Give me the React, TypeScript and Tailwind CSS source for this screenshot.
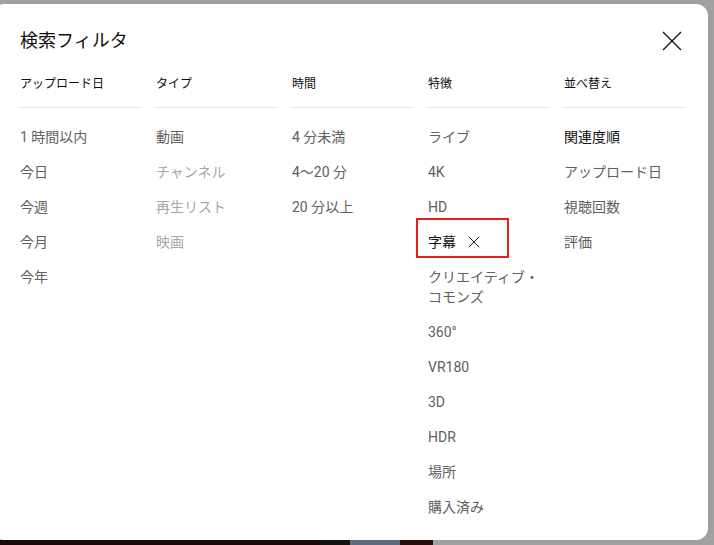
import React from "react";

type Item = { label: React.ReactNode; tone?: "normal" | "dim" | "active"; selected?: boolean };

const columns: { title: string; items: Item[] }[] = [
  {
    title: "アップロード日",
    items: [
      { label: "1 時間以内" },
      { label: "今日" },
      { label: "今週" },
      { label: "今月" },
      { label: "今年" },
    ],
  },
  {
    title: "タイプ",
    items: [
      { label: "動画" },
      { label: "チャンネル", tone: "dim" },
      { label: "再生リスト", tone: "dim" },
      { label: "映画", tone: "dim" },
    ],
  },
  {
    title: "時間",
    items: [{ label: "4 分未満" }, { label: "4～20 分" }, { label: "20 分以上" }],
  },
  {
    title: "特徴",
    items: [
      { label: "ライブ" },
      { label: "4K" },
      { label: "HD" },
      { label: "字幕", tone: "active", selected: true },
      {
        label: (
          <>
            クリエイティブ・
            <br />
            コモンズ
          </>
        ),
      },
      { label: "360°" },
      { label: "VR180" },
      { label: "3D" },
      { label: "HDR" },
      { label: "場所" },
      { label: "購入済み" },
    ],
  },
  {
    title: "並べ替え",
    items: [
      { label: "関連度順", tone: "active" },
      { label: "アップロード日" },
      { label: "視聴回数" },
      { label: "評価" },
    ],
  },
];

function CloseIcon({ size, stroke }: { size: number; stroke: number }) {
  return (
    <svg width={size} height={size} viewBox="0 0 24 24" fill="none">
      <path d="M3 3 L21 21 M21 3 L3 21" stroke="#0f0f0f" strokeWidth={stroke} />
    </svg>
  );
}

export default function App() {
  return (
    <div className="relative w-[714px] h-[545px] overflow-hidden bg-[#a0a0a0] font-['Roboto','Noto_Sans_CJK_JP',sans-serif]">
      {/* background page hints */}
      <div className="absolute left-0 right-0 bottom-0 h-[5px] flex">
        <div className="w-[320px] bg-[#1c0606]" />
        <div className="w-[30px] bg-[#16100e]" />
        <div className="w-[50px] bg-[#5d6c82]" />
        <div className="w-[33px] bg-[#2a0c0c]" />
        <div className="flex-1 bg-[#a0a0a0]" />
      </div>

      {/* dialog */}
      <div className="absolute left-[-8px] top-[4px] w-[716px] h-[536px] bg-white rounded-[12px] pl-[28px] pt-[25px]">
        <div className="flex items-center justify-between pr-[24px] h-[24px]">
          <h2 className="text-[18px] leading-[24px] text-[#0f0f0f] font-normal">検索フィルタ</h2>
          <CloseIcon size={24} stroke={1.3} />
        </div>

        <div className="mt-[21px] flex gap-[16px]">
          {columns.map((col) => (
            <div key={col.title} className="w-[120px]">
              <div className="text-[12px] leading-[20px] text-[#0f0f0f] pb-[13px] border-b border-[#e5e5e5]">
                {col.title}
              </div>
              <div className="mt-[11px] flex flex-col">
                {col.items.map((it, i) => (
                  <div
                    key={i}
                    className={
                      "relative py-[7.5px] text-[14px] leading-[20px] flex items-center gap-[11px] " +
                      (it.tone === "dim"
                        ? "text-[#a6a6a6]"
                        : it.tone === "active"
                        ? "text-[#0f0f0f]"
                        : "text-[#606060]")
                    }
                  >
                    <span>{it.label}</span>
                    {it.selected && (
                      <>
                        <CloseIcon size={14} stroke={1.6} />
                        <span className="absolute left-[-12px] top-[-6px] w-[93px] h-[40px] border-2 border-[#e62117]" />
                      </>
                    )}
                  </div>
                ))}
              </div>
            </div>
          ))}
        </div>
      </div>
    </div>
  );
}
